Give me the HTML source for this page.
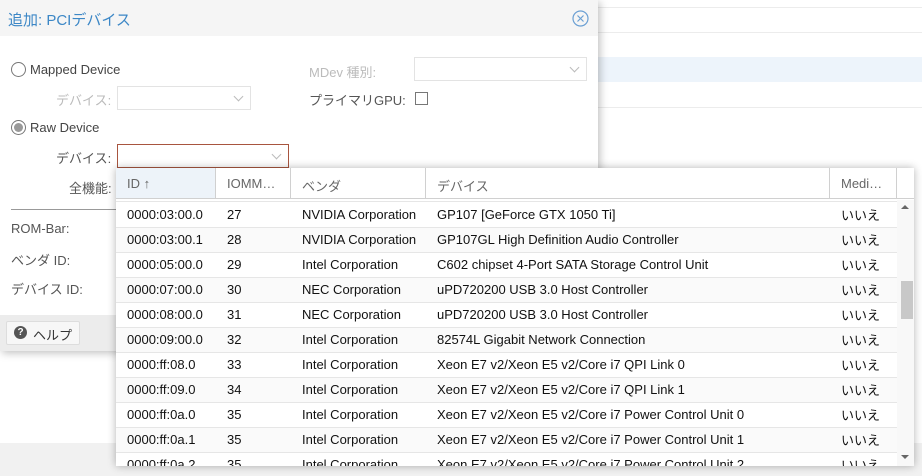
<!DOCTYPE html>
<html><head><meta charset="utf-8"><style>
*{box-sizing:border-box;margin:0;padding:0}
body{width:922px;height:476px;overflow:hidden;background:#fff;font-family:"Liberation Sans","Noto Sans CJK JP",sans-serif;font-size:13px;color:#333;position:relative}
.a{position:absolute}
.lbl{position:absolute;font-size:13px;color:#555;white-space:nowrap}
.dis{color:#bbb}
.combo{position:absolute;height:24px;border:1px solid #e3e3e3;background:#fff}
.combo:after{content:"";position:absolute;right:8px;top:6px;width:6px;height:6px;border-right:1px solid #bbb;border-bottom:1px solid #bbb;transform:rotate(45deg)}
.radio{position:absolute;width:15px;height:15px;border:1px solid #777;border-radius:50%;background:#fff}
table{border-collapse:collapse;table-layout:fixed}
td{height:25px;border-bottom:1px solid #e6e6e6;padding-left:11px;white-space:nowrap;overflow:hidden;font-size:13px;color:#111}
tr:nth-child(even) td{background:#fafafa}
</style></head><body>
<div class="a" style="left:0;top:7px;width:922px;height:1px;background:#ececec"></div>
<div class="a" style="left:0;top:32px;width:922px;height:1px;background:#ececec"></div>
<div class="a" style="left:0;top:57px;width:922px;height:25px;background:#edf4fb"></div>
<div class="a" style="left:0;top:107px;width:922px;height:1px;background:#ececec"></div>
<div class="a" style="left:0;top:443px;width:922px;height:33px;background:#f1f1f1"></div>
<div class="a" style="left:0;top:0;width:598px;height:351px;background:#fff;box-shadow:2px 2px 8px rgba(0,0,0,.25)">
 <div class="a" style="left:0;top:0;width:598px;height:36px;background:#f5f5f5"></div>
 <div class="a" style="left:8px;top:9px;font-size:15px;color:#3c87c6">追加: PCIデバイス</div>
 <svg class="a" style="left:572px;top:10px" width="17" height="17" viewBox="0 0 17 17"><circle cx="8.5" cy="8.5" r="7.5" fill="none" stroke="#6a9fd3" stroke-width="1.2"/><path d="M5.5 5.5L11.5 11.5M11.5 5.5L5.5 11.5" stroke="#6a9fd3" stroke-width="1.2"/></svg>
 <div class="radio" style="left:11px;top:62px"></div>
 <div class="lbl" style="left:30px;top:62px;color:#444">Mapped Device</div>
 <div class="lbl dis" style="left:56px;top:90px">デバイス:</div>
 <div class="combo" style="left:117px;top:86px;width:134px"></div>
 <div class="lbl dis" style="left:309px;top:62px">MDev 種別:</div>
 <div class="combo" style="left:414px;top:57px;width:173px"></div>
 <div class="lbl" style="left:309px;top:90px">プライマリGPU:</div>
 <div class="a" style="left:415px;top:92px;width:13px;height:13px;border:1px solid #777"></div>
 <div class="radio" style="left:11px;top:120px"><div class="a" style="left:2px;top:2px;width:9px;height:9px;border-radius:50%;background:#999"></div></div>
 <div class="lbl" style="left:30px;top:120px;color:#444">Raw Device</div>
 <div class="lbl" style="left:56px;top:148px">デバイス:</div>
 <div class="combo" style="left:117px;top:144px;width:172px;border-color:#a8553f"></div>
 <div class="lbl" style="left:69px;top:178px">全機能:</div>
 <div class="a" style="left:11px;top:209px;width:110px;height:1px;background:#999"></div>
 <div class="lbl" style="left:11px;top:221px">ROM-Bar:</div>
 <div class="lbl" style="left:11px;top:250px">ベンダ ID:</div>
 <div class="lbl" style="left:11px;top:279px">デバイス ID:</div>
 <div class="a" style="left:0;top:315px;width:598px;height:36px;background:#ececec"></div>
 <div class="a" style="left:6px;top:321px;width:74px;height:24px;background:#f7f7f7;border:1px solid #ddd;border-radius:2px"></div>
 <div class="a" style="left:14px;top:326px;width:13px;height:13px;border-radius:50%;background:#555;color:#fff;font-size:10px;font-weight:bold;text-align:center;line-height:13px">?</div>
 <div class="lbl" style="left:33px;top:325px;color:#333">ヘルプ</div>
</div>
<div class="a" style="left:116px;top:168px;width:798px;height:298px;background:#fff;box-shadow:0 0 8px rgba(0,0,0,.3);overflow:hidden">
 <div class="a" style="left:0;top:0;width:798px;height:31px;border-bottom:1px solid #d0d0d0;background:#fff"></div>
 <div class="a" style="left:0;top:0;width:100px;height:30px;background:#edf3f9;border-right:1px solid #d0d0d0"></div>
 <div class="a" style="left:100px;top:0;width:75px;height:30px;border-right:1px solid #d0d0d0"></div>
 <div class="a" style="left:175px;top:0;width:135px;height:30px;border-right:1px solid #d0d0d0"></div>
 <div class="a" style="left:310px;top:0;width:404px;height:30px;border-right:1px solid #d0d0d0"></div>
 <div class="a" style="left:714px;top:0;width:67px;height:30px;border-right:1px solid #d0d0d0"></div>
 <div class="lbl" style="left:11px;top:8px;color:#666">ID ↑</div>
 <div class="lbl" style="left:111px;top:8px;color:#666">IOMM…</div>
 <div class="lbl" style="left:186px;top:8px;color:#666">ベンダ</div>
 <div class="lbl" style="left:321px;top:8px;color:#666">デバイス</div>
 <div class="lbl" style="left:725px;top:8px;color:#666">Medi…</div>
 <div class="a" style="left:0;top:33px;width:781px;height:1px;background:#e6e6e6"></div>
 <table class="a" style="left:0;top:34px;width:781px">
  <colgroup><col style="width:100px"><col style="width:75px"><col style="width:135px"><col style="width:404px"><col style="width:67px"></colgroup>
  <tr><td>0000:03:00.0</td><td>27</td><td>NVIDIA Corporation</td><td>GP107 [GeForce GTX 1050 Ti]</td><td>いいえ</td></tr>
  <tr><td>0000:03:00.1</td><td>28</td><td>NVIDIA Corporation</td><td>GP107GL High Definition Audio Controller</td><td>いいえ</td></tr>
  <tr><td>0000:05:00.0</td><td>29</td><td>Intel Corporation</td><td>C602 chipset 4-Port SATA Storage Control Unit</td><td>いいえ</td></tr>
  <tr><td>0000:07:00.0</td><td>30</td><td>NEC Corporation</td><td>uPD720200 USB 3.0 Host Controller</td><td>いいえ</td></tr>
  <tr><td>0000:08:00.0</td><td>31</td><td>NEC Corporation</td><td>uPD720200 USB 3.0 Host Controller</td><td>いいえ</td></tr>
  <tr><td>0000:09:00.0</td><td>32</td><td>Intel Corporation</td><td>82574L Gigabit Network Connection</td><td>いいえ</td></tr>
  <tr><td>0000:ff:08.0</td><td>33</td><td>Intel Corporation</td><td>Xeon E7 v2/Xeon E5 v2/Core i7 QPI Link 0</td><td>いいえ</td></tr>
  <tr><td>0000:ff:09.0</td><td>34</td><td>Intel Corporation</td><td>Xeon E7 v2/Xeon E5 v2/Core i7 QPI Link 1</td><td>いいえ</td></tr>
  <tr><td>0000:ff:0a.0</td><td>35</td><td>Intel Corporation</td><td>Xeon E7 v2/Xeon E5 v2/Core i7 Power Control Unit 0</td><td>いいえ</td></tr>
  <tr><td>0000:ff:0a.1</td><td>35</td><td>Intel Corporation</td><td>Xeon E7 v2/Xeon E5 v2/Core i7 Power Control Unit 1</td><td>いいえ</td></tr>
  <tr><td>0000:ff:0a.2</td><td>35</td><td>Intel Corporation</td><td>Xeon E7 v2/Xeon E5 v2/Core i7 Power Control Unit 2</td><td>いいえ</td></tr>
 </table>
 <div class="a" style="left:781px;top:32px;width:17px;height:266px;background:#f8f8f8"></div>
 <div class="a" style="left:785px;top:37px;width:0;height:0;border-left:4px solid transparent;border-right:4px solid transparent;border-bottom:4px solid #666"></div>
 <div class="a" style="left:785px;top:113px;width:12px;height:38px;background:#c8c8c8"></div>
 <div class="a" style="left:785px;top:287px;width:0;height:0;border-left:4px solid transparent;border-right:4px solid transparent;border-top:4px solid #666"></div>
</div>
</body></html>
